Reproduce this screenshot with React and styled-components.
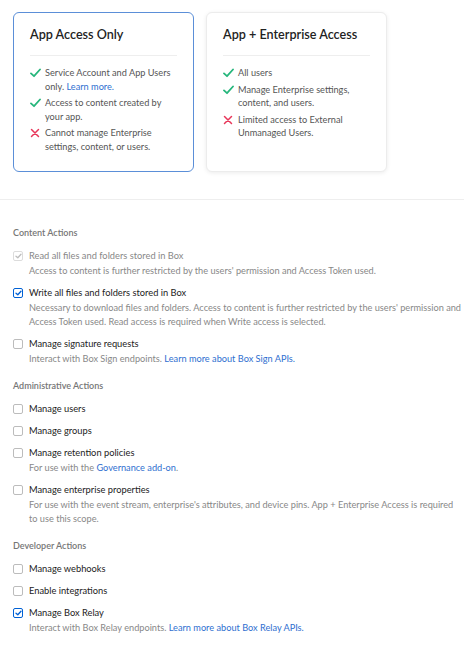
import styled, { createGlobalStyle } from "styled-components"

const GlobalStyle = createGlobalStyle`
  body {
    margin: 0;
    background: #fff;
    font-family: Lato, "Open Sans", sans-serif;
    color: #222;
  }
`;

const appFeatures = [
  { ok: true, text: "Service Account and App Users only.", link: "Learn more." },
  { ok: true, text: "Access to content created by your app." },
  { ok: false, text: "Cannot manage Enterprise settings, content, or users." },
];

const enterpriseFeatures = [
  { ok: true, text: "All users" },
  { ok: true, text: "Manage Enterprise settings, content, and users." },
  { ok: false, text: "Limited access to External Unmanaged Users." },
];

const sections = [
  {
    title: "Content Actions",
    items: [
      {
        label: "Read all files and folders stored in Box",
        state: "disabled",
        desc: "Access to content is further restricted by the users' permission and Access Token used.",
      },
      {
        label: "Write all files and folders stored in Box",
        state: "checked",
        desc: "Necessary to download files and folders. Access to content is further restricted by the users' permission and Access Token used. Read access is required when Write access is selected.",
      },
      {
        label: "Manage signature requests",
        desc: "Interact with Box Sign endpoints.",
        link: "Learn more about Box Sign APIs.",
      },
    ],
  },
  {
    title: "Administrative Actions",
    items: [
      { label: "Manage users" },
      { label: "Manage groups" },
      {
        label: "Manage retention policies",
        desc: "For use with the",
        link: "Governance add-on",
        tail: ".",
      },
      {
        label: "Manage enterprise properties",
        desc: "For use with the event stream, enterprise's attributes, and device pins. App + Enterprise Access is required to use this scope.",
      },
    ],
  },
  {
    title: "Developer Actions",
    items: [
      { label: "Manage webhooks" },
      { label: "Enable integrations" },
      {
        label: "Manage Box Relay",
        state: "checked",
        desc: "Interact with Box Relay endpoints.",
        link: "Learn more about Box Relay APIs.",
      },
    ],
  },
];

function CheckIcon() {
  return (
    <svg width="11" height="10" viewBox="0 0 11 10">
      <path d="M1 5.4 L4 8.2 L10 1.5" fill="none" stroke="#26b67c" strokeWidth="1.8" strokeLinecap="round" strokeLinejoin="round" />
    </svg>
  );
}

function CrossIcon() {
  return (
    <svg width="10" height="10" viewBox="0 0 10 10">
      <path d="M1.5 1.5 L8.5 8.5 M8.5 1.5 L1.5 8.5" fill="none" stroke="#e8375a" strokeWidth="1.5" strokeLinecap="round" />
    </svg>
  );
}

function Card({ title, features, selected }) {
  return (
    <CardBox $selected={selected}>
      <CardTitle>{title}</CardTitle>
      <FeatureList>
        {features.map((f, i) => (
          <Feature key={i}>
            <FeatureIcon>{f.ok ? <CheckIcon /> : <CrossIcon />}</FeatureIcon>
            <span>
              {f.text}
              {f.link && <> <Link>{f.link}</Link></>}
            </span>
          </Feature>
        ))}
      </FeatureList>
    </CardBox>
  );
}

function Checkbox({ state }) {
  return (
    <Box $state={state}>
      {state && (
        <svg width="7" height="6" viewBox="0 0 7 6">
          <path
            d="M1 3.2 L2.8 4.8 L6 1.2"
            fill="none"
            stroke={state === "disabled" ? "#bdbdbd" : "#0061d5"}
            strokeWidth="1.3"
            strokeLinecap="round"
            strokeLinejoin="round"
          />
        </svg>
      )}
    </Box>
  );
}

export default function App() {
  return (
    <>
      <GlobalStyle />
      <Page>
        <Cards>
          <Card title="App Access Only" features={appFeatures} selected />
          <Card title="App + Enterprise Access" features={enterpriseFeatures} />
        </Cards>
        <Divider />
        {sections.map((s) => (
          <Section key={s.title}>
            <SectionTitle>{s.title}</SectionTitle>
            {s.items.map((item) => (
              <Option key={item.label}>
                <Checkbox state={item.state} />
                <OptionBody>
                  <OptionLabel $disabled={item.state === "disabled"}>{item.label}</OptionLabel>
                  {item.desc && (
                    <Description>
                      {item.desc}
                      {item.link && <> <Link>{item.link}</Link></>}
                      {item.tail}
                    </Description>
                  )}
                </OptionBody>
              </Option>
            ))}
          </Section>
        ))}
      </Page>
    </>
  );
}

const Page = styled.div`
  width: 464px;
  padding-top: 12px;
`;

const Cards = styled.div`
  display: flex;
  gap: 12px;
  padding-left: 13px;
`;

const CardBox = styled.div`
  box-sizing: border-box;
  width: 181px;
  height: 160px;
  padding: 14px 16px 0 16px;
  border-radius: 6px;
  background: #fff;
  border: 1px solid ${(p) => (p.$selected ? "#5b8fd8" : "#ececec")};
  box-shadow: ${(p) => (p.$selected ? "none" : "0 1px 4px rgba(0,0,0,0.08)")};
`;

const CardTitle = styled.div`
  font-size: 12.6px;
  font-weight: 600;
  color: #222;
  line-height: 16px;
  padding-bottom: 12px;
  border-bottom: 1px solid #eee;
`;

const FeatureList = styled.div`
  display: flex;
  flex-direction: column;
  gap: 3px;
  padding-top: 10px;
`;

const Feature = styled.div`
  display: flex;
  align-items: flex-start;
  font-size: 9.2px;
  line-height: 13.5px;
  color: #555;
`;

const FeatureIcon = styled.span`
  flex: none;
  width: 15px;
  padding-top: 2px;
  display: flex;
`;

const Link = styled.span`
  color: #2f6fd0;
`;

const Divider = styled.div`
  height: 1px;
  background: #eeeeee;
  margin-top: 27px;
`;

const Section = styled.div`
  padding-left: 13px;
  margin-top: 27px;
  & + & {
    margin-top: 14px;
  }
`;

const SectionTitle = styled.div`
  font-size: 9px;
  font-weight: 600;
  color: #767676;
  line-height: 12px;
  margin-bottom: 10px;
`;

const Option = styled.div`
  display: flex;
  align-items: flex-start;
  gap: 6px;
  margin-bottom: 8px;
`;

const Box = styled.span`
  flex: none;
  box-sizing: border-box;
  width: 10px;
  height: 10px;
  margin-top: 2px;
  border-radius: 2px;
  display: flex;
  align-items: center;
  justify-content: center;
  background: #fff;
  border: 1px solid
    ${(p) => (p.$state === "checked" ? "#0061d5" : p.$state === "disabled" ? "#dcdcdc" : "#bcbcbc")};
`;

const OptionBody = styled.div`
  display: flex;
  flex-direction: column;
  gap: 1px;
`;

const OptionLabel = styled.div`
  font-size: 9.3px;
  line-height: 14px;
  color: ${(p) => (p.$disabled ? "#888" : "#222")};
`;

const Description = styled.div`
  font-size: 9.2px;
  line-height: 14px;
  color: #888;
`;
